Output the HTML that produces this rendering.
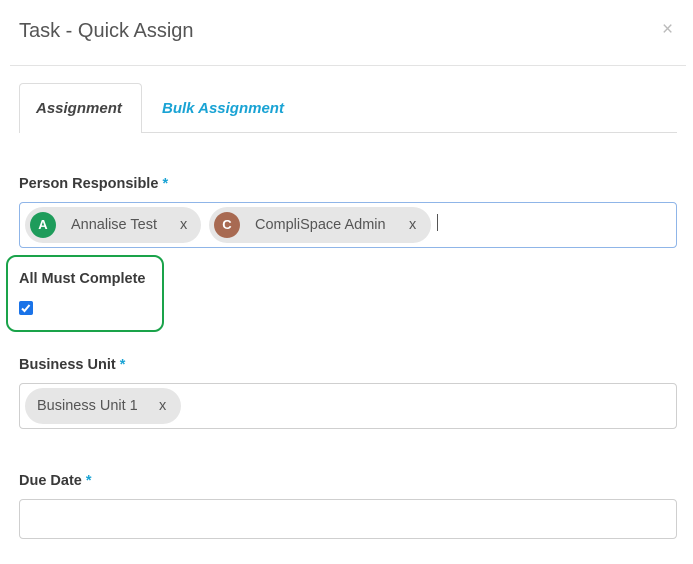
<!DOCTYPE html>
<html><head><style>
*{box-sizing:border-box}
body{margin:0;width:693px;height:564px;background:#fff;font-family:"Liberation Sans",sans-serif;position:relative;overflow:hidden;color:#333}
.a{position:absolute}
.lbl{font-size:14.5px;font-weight:bold;color:#3a3a3a}
.star{color:#1aa3d4}
.box{border:1px solid #cfcfcf;border-radius:4px;height:46px;left:19px;width:658px}
.chip{position:absolute;top:4px;height:36px;background:#e6e6e6;border-radius:18px;font-size:14.5px;color:#555;line-height:36px}
.av{position:absolute;left:5px;top:5px;width:26px;height:26px;border-radius:50%;color:#fff;font-weight:bold;font-size:13px;text-align:center;line-height:26px}
</style></head><body>
<div class="a" style="left:19px;top:20px;font-size:20px;color:#555">Task - Quick Assign</div>
<div class="a" style="left:662px;top:19px;font-size:19px;color:#bbb">×</div>
<div class="a" style="left:10px;top:65px;width:676px;height:1px;background:#e3e3e3"></div>
<div class="a" style="left:19px;top:83px;width:123px;height:50px;border:1px solid #ddd;border-bottom:none;border-radius:4px 4px 0 0;background:#fff"></div>
<div class="a" style="left:141px;top:132px;width:536px;height:1px;background:#ddd"></div>
<div class="a" style="left:36px;top:100px;font-size:15px;font-style:italic;font-weight:bold;color:#444">Assignment</div>
<div class="a" style="left:162px;top:100px;font-size:15px;font-style:italic;font-weight:bold;color:#1aa3d4">Bulk Assignment</div>
<div class="a lbl" style="left:19px;top:176px">Person Responsible <span class="star">*</span></div>
<div class="a box" style="top:202px;border-color:#8fb5e8">
 <div class="chip" style="left:5px;width:176px"><div class="av" style="background:#1e9c5b">A</div><span style="position:absolute;left:46px">Annalise Test</span><span style="position:absolute;left:155px">x</span></div>
 <div class="chip" style="left:189px;width:222px"><div class="av" style="background:#a86a52">C</div><span style="position:absolute;left:46px">CompliSpace Admin</span><span style="position:absolute;left:200px">x</span></div>
 <div class="a" style="left:417px;top:11px;width:1px;height:17px;background:#555"></div>
</div>
<div class="a" style="left:6px;top:255px;width:158px;height:77px;border:2.5px solid #1aa34a;border-radius:10px"></div>
<div class="a lbl" style="left:19px;top:271px">All Must Complete</div>
<div class="a" style="left:19px;top:301px;width:14px;height:14px;background:#1a73e8;border-radius:2px"><svg width="14" height="14"><path d="M3 7.5l2.5 2.5 5-6" stroke="#fff" stroke-width="2" fill="none"/></svg></div>
<div class="a lbl" style="left:19px;top:357px">Business Unit <span class="star">*</span></div>
<div class="a box" style="top:383px">
 <div class="chip" style="left:5px;width:156px;padding-left:12px">Business Unit 1<span style="position:absolute;left:134px">x</span></div>
</div>
<div class="a lbl" style="left:19px;top:473px">Due Date <span class="star">*</span></div>
<div class="a box" style="top:499px;height:40px"></div>
</body></html>
